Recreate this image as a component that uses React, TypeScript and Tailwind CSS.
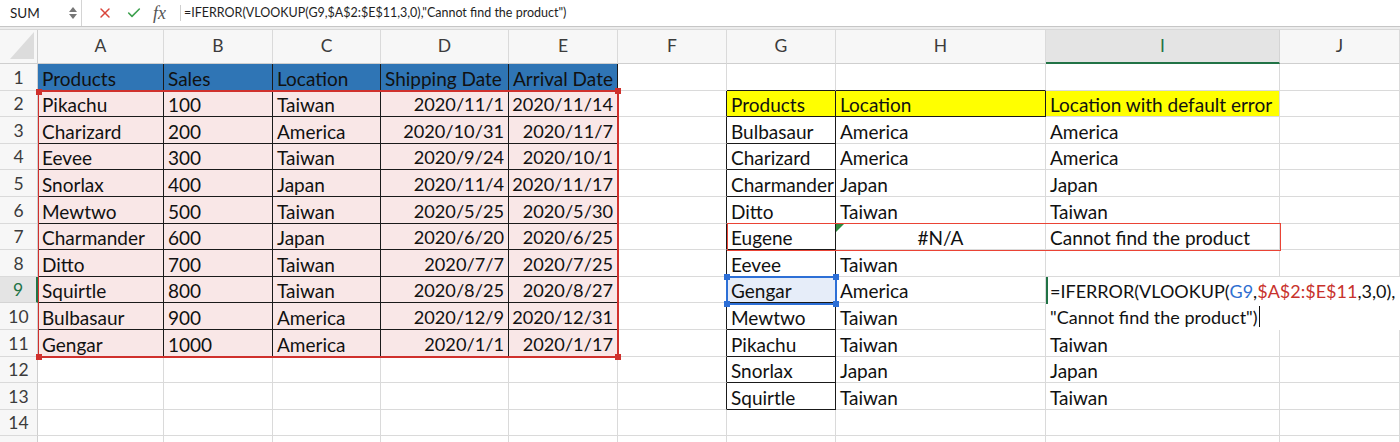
import { Check, X } from 'lucide-react';

const T1 = [
  ['Pikachu', '100', 'Taiwan', '2020/11/1', '2020/11/14'],
  ['Charizard', '200', 'America', '2020/10/31', '2020/11/7'],
  ['Eevee', '300', 'Taiwan', '2020/9/24', '2020/10/1'],
  ['Snorlax', '400', 'Japan', '2020/11/4', '2020/11/17'],
  ['Mewtwo', '500', 'Taiwan', '2020/5/25', '2020/5/30'],
  ['Charmander', '600', 'Japan', '2020/6/20', '2020/6/25'],
  ['Ditto', '700', 'Taiwan', '2020/7/7', '2020/7/25'],
  ['Squirtle', '800', 'Taiwan', '2020/8/25', '2020/8/27'],
  ['Bulbasaur', '900', 'America', '2020/12/9', '2020/12/31'],
  ['Gengar', '1000', 'America', '2020/1/1', '2020/1/17'],
];

// G, H, I for rows 3..13
const T2 = [
  ['Bulbasaur', 'America', 'America'],
  ['Charizard', 'America', 'America'],
  ['Charmander', 'Japan', 'Japan'],
  ['Ditto', 'Taiwan', 'Taiwan'],
  ['Eugene', '#N/A', 'Cannot find the product'],
  ['Eevee', 'Taiwan', ''],
  ['Gengar', 'America', ''],
  ['Mewtwo', 'Taiwan', ''],
  ['Pikachu', 'Taiwan', 'Taiwan'],
  ['Snorlax', 'Japan', 'Japan'],
  ['Squirtle', 'Taiwan', 'Taiwan'],
];

const LETTERS = ['A', 'B', 'C', 'D', 'E', 'F', 'G', 'H', 'I', 'J'];
const HEADER_HEAD = ['Products', 'Sales', 'Location', 'Shipping Date', 'Arrival Date'];

const GRID = 'border-r-[#dadada]';
const GRID_B = 'border-b-[#dadada]';
const BLACK_R = 'border-r-[#1a1a1a]';
const BLACK_B = 'border-b-[#1a1a1a]';

type CellProps = {
  text?: string;
  align?: 'left' | 'right' | 'center';
  bg?: string;
  rb?: string;
  bb?: string;
  errorMark?: boolean;
};

function Cell({ text, align = 'left', bg = 'bg-white', rb = GRID, bb = GRID_B, errorMark }: CellProps) {
  const justify =
    align === 'right' ? 'justify-end' : align === 'center' ? 'justify-center' : 'justify-start';
  // dates are narrower in the original font, keep them a touch smaller
  const size = align === 'right' ? 'text-[18.2px]' : 'text-[19px]';
  return (
    <div
      className={`relative flex items-end whitespace-nowrap border-r border-b px-[4px] leading-[23px] text-[#111] ${size} ${bg} ${rb} ${bb} ${justify}`}
    >
      {errorMark && (
        <span className="absolute left-0 top-0 h-0 w-0 border-t-[8px] border-r-[8px] border-t-[#2d8a3e] border-r-transparent" />
      )}
      {text}
    </div>
  );
}

function cellFor(r: number, c: number): CellProps {
  // table 1 : A1:E11
  if (c <= 4) {
    if (r === 1) return { text: HEADER_HEAD[c], bg: 'bg-[#2f75b5]', rb: BLACK_R, bb: BLACK_B };
    if (r >= 2 && r <= 11)
      return {
        text: T1[r - 2][c],
        align: c >= 3 ? 'right' : 'left',
        bg: 'bg-[#f9e7e7]',
        rb: BLACK_R,
        bb: BLACK_B,
      };
    return {};
  }
  if (c === 5) return r >= 2 && r <= 13 ? { rb: BLACK_R } : {};
  if (c === 6) {
    if (r === 1) return { bb: BLACK_B };
    if (r === 2) return { text: 'Products', bg: 'bg-[#ffff00]', rb: BLACK_R, bb: BLACK_B };
    if (r <= 13)
      return {
        text: T2[r - 3][0],
        bg: r === 9 ? 'bg-[#e6edf9]' : 'bg-white',
        rb: BLACK_R,
        bb: BLACK_B,
      };
    return {};
  }
  if (c === 7) {
    if (r === 1) return { bb: BLACK_B };
    if (r === 2) return { text: 'Location', bg: 'bg-[#ffff00]', rb: BLACK_R, bb: BLACK_B };
    if (r === 7) return { text: '#N/A', align: 'center', errorMark: true };
    if (r <= 13) return { text: T2[r - 3][1] };
    return {};
  }
  if (c === 8) {
    if (r === 2) return { text: 'Location with default error', bg: 'bg-[#ffff00]' };
    if (r >= 3 && r <= 13) return { text: T2[r - 3][2] };
    return {};
  }
  return {};
}

function FormulaBar() {
  return (
    <div className="flex h-[26px] items-center bg-white text-[13px] text-[#1e1e1e]">
      <div className="flex h-full w-[82px] items-center justify-between border-r border-[#d4d4d4] pl-[10px] pr-[4px]">
        <span className="text-[13.5px]">SUM</span>
        <div className="flex flex-col items-center gap-[2px] text-[#777]">
          <svg width="8" height="5" viewBox="0 0 8 5">
            <path d="M4 0 L8 5 L0 5 Z" fill="currentColor" />
          </svg>
          <svg width="8" height="5" viewBox="0 0 8 5">
            <path d="M0 0 L8 0 L4 5 Z" fill="currentColor" />
          </svg>
        </div>
      </div>
      <div className="flex h-full w-[98px] items-center">
        <X className="ml-[15px] h-[16px] w-[16px] text-[#d9453b]" strokeWidth={2.2} />
        <Check className="ml-[13px] h-[16px] w-[16px] text-[#3ea14f]" strokeWidth={2.4} />
        <span className="ml-[11px] font-['Liberation_Serif',serif] text-[18px] italic text-[#555]">fx</span>
      </div>
      <div className="h-[16px] w-px bg-[#cfcfcf]" />
      <span className="pl-[3px] text-[12.5px]">=IFERROR(VLOOKUP(G9,$A$2:$E$11,3,0),"Cannot find the product")</span>
    </div>
  );
}

function Handle({ pos, color }: { pos: string; color: string }) {
  return <span className={`absolute h-[6px] w-[6px] ${pos} ${color}`} />;
}

export default function App() {
  const rows = Array.from({ length: 15 }, (_, i) => i + 1);

  return (
    <div className="h-[442px] w-[1400px] overflow-hidden bg-white font-['Lato',sans-serif]">
      <FormulaBar />
      <div className="h-[4px] border-t border-b border-t-[#c6c6c6] border-b-[#d8d8d8] bg-[#ececec]" />

      <div className="relative">
        <div className="grid grid-cols-[38px_126px_109px_108px_128px_109px_109px_109px_210px_234px_1fr] grid-rows-[34px_repeat(15,26.6px)]">
          {/* corner */}
          <div className="flex items-end justify-end border-r border-b border-r-[#cfcfcf] border-b-[#cfcfcf] bg-[#f7f7f7] pb-[4px] pr-[3px]">
            <svg width="24" height="27" viewBox="0 0 24 27">
              <path d="M24 0 L24 27 L0 27 Z" fill="#dcdcdc" />
            </svg>
          </div>
          {LETTERS.map((l) => (
            <div
              key={l}
              className={
                l === 'I'
                  ? 'flex items-center justify-center border-r border-b-2 border-r-[#d4d4d4] border-b-[#217346] bg-[#e4e4e4] text-[17.5px] text-[#217346]'
                  : 'flex items-center justify-center border-r border-b border-r-[#dadada] border-b-[#cfcfcf] bg-[#f7f7f7] text-[17.5px] text-[#3c3c3c]'
              }
            >
              {l}
            </div>
          ))}

          {rows.map((r) => (
            <div key={r} className="contents">
              <div
                className={
                  r === 9
                    ? 'flex items-center justify-center border-r-2 border-b border-r-[#217346] border-b-[#d4d4d4] bg-[#e4e4e4] pt-[2px] text-[17.5px] text-[#217346]'
                    : 'flex items-center justify-center border-r border-b border-r-[#cfcfcf] border-b-[#dadada] bg-[#f7f7f7] pt-[2px] text-[17.5px] text-[#3c3c3c]'
                }
              >
                {r < 15 ? r : ''}
              </div>
              {LETTERS.map((_, c) => (
                <Cell key={c} {...cellFor(r, c)} />
              ))}
            </div>
          ))}
        </div>

        {/* formula reference A2:E11 */}
        <div className="pointer-events-none absolute left-[38px] top-[59.6px] h-[268px] w-[581px] border-2 border-l border-[#d0312d]">
          <Handle pos="-left-[3px] -top-[3px]" color="bg-[#d0312d]" />
          <Handle pos="-right-[4px] -top-[4px]" color="bg-[#d0312d]" />
          <Handle pos="-left-[3px] -bottom-[4px]" color="bg-[#d0312d]" />
          <Handle pos="-right-[4px] -bottom-[4px]" color="bg-[#d0312d]" />
        </div>

        {/* red border on G7:I7 */}
        <div className="pointer-events-none absolute left-[727px] top-[193px] h-[28px] w-[554px] border border-[#ea4335]" />

        {/* reference G9 */}
        <div className="pointer-events-none absolute left-[726px] top-[246px] h-[29px] w-[111px] border-2 border-[#2d6fd6]">
          <Handle pos="-left-[4px] -top-[4px]" color="bg-[#2d6fd6]" />
          <Handle pos="-right-[4px] -top-[4px]" color="bg-[#2d6fd6]" />
          <Handle pos="-left-[4px] -bottom-[4px]" color="bg-[#2d6fd6]" />
          <Handle pos="-right-[4px] -bottom-[4px]" color="bg-[#2d6fd6]" />
        </div>

        {/* in-cell editor on I9 */}
        <div className="absolute left-[1046px] right-0 top-[247px] h-[53px] bg-white text-[18px] leading-[23px] text-[#111]">
          <span className="absolute left-0 top-0 h-[27px] w-[2px] bg-[#217346]" />
          <div className="flex h-[26.6px] items-end whitespace-nowrap pl-[4px] pb-[1px]">
            =IFERROR(VLOOKUP(<span className="text-[#2f6fd0]">G9</span>,
            <span className="text-[#c8322c]">$A$2:$E$11</span>,3,0),
          </div>
          <div className="flex h-[26.6px] items-end whitespace-nowrap pl-[4px] pb-[1px]">
            "Cannot find the product")
            <span className="mb-[2px] ml-[1px] inline-block h-[21px] w-[1.5px] bg-[#111]" />
          </div>
        </div>
      </div>
    </div>
  );
}
